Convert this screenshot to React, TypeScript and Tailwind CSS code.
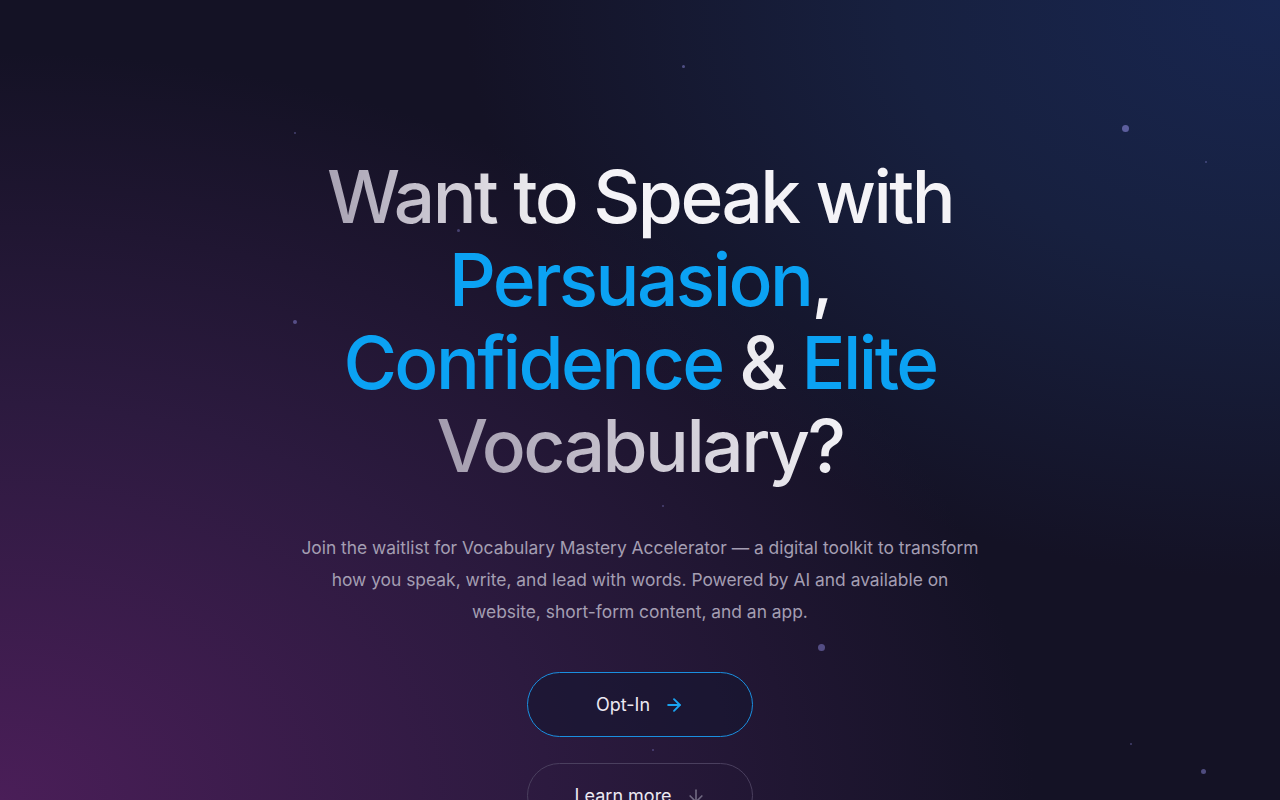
import { ArrowRight, ArrowDown } from "lucide-react";

const dots = [
    { x: 683, y: 66, s: 3, o: "opacity-50" },
    { x: 295, y: 133, s: 2, o: "opacity-40" },
    { x: 1125, y: 128, s: 7, o: "opacity-60" },
    { x: 1206, y: 162, s: 2, o: "opacity-40" },
    { x: 458, y: 230, s: 3, o: "opacity-40" },
    { x: 295, y: 322, s: 4, o: "opacity-50" },
    { x: 402, y: 378, s: 3, o: "opacity-40" },
    { x: 663, y: 506, s: 2, o: "opacity-40" },
    { x: 821, y: 647, s: 7, o: "opacity-50" },
    { x: 653, y: 750, s: 2, o: "opacity-40" },
    { x: 1131, y: 744, s: 2, o: "opacity-40" },
    { x: 1203, y: 771, s: 5, o: "opacity-50" },
];

export default function App() {
    return (
        <div
            className="relative w-full h-[800px] overflow-hidden bg-[#141225]"
            style={{ fontFamily: "Inter, 'Noto Sans', sans-serif" }}
        >
            <div className="absolute inset-0 bg-[radial-gradient(ellipse_95%_110%_at_0%_100%,#4a1e58_0%,#2c1a3f_45%,transparent_85%)]" />
            <div className="absolute inset-0 bg-[radial-gradient(ellipse_75%_85%_at_100%_0%,#182650_0%,#17203f_40%,transparent_85%)]" />

            {dots.map((d, i) => (
                <div
                    key={i}
                    className={`absolute rounded-full bg-[#8a86d8] blur-[0.5px] ${d.o}`}
                    style={{ left: d.x - d.s / 2, top: d.y - d.s / 2, width: d.s, height: d.s }}
                />
            ))}

            <div className="relative flex flex-col items-center pt-[155px]">
                <h1 className="text-center text-[73px] leading-[83px] font-medium tracking-[-0.035em]">
                    <span className="bg-gradient-to-r from-[#a8a2b3] to-white bg-clip-text text-transparent">Want to </span>
                    <span className="text-[#f4f3f7]">Speak with</span>
                    <br />
                    <span className="text-[#0ba2f3]">Persuasion</span>
                    <span className="text-[#f4f3f7]">,</span>
                    <br />
                    <span className="text-[#0ba2f3]">Confidence</span>
                    <span className="text-[#ecebf0]"> &amp; </span>
                    <span className="text-[#0ba2f3]">Elite</span>
                    <br />
                    <span className="bg-gradient-to-r from-[#a39cae] to-[#f2f1f5] bg-clip-text text-transparent">Vocabulary?</span>
                </h1>

                <p className="mt-[45px] w-[682px] text-center text-[17.4px] leading-[32px] text-[#a49eb2]">
                    Join the waitlist for Vocabulary Mastery Accelerator — a digital toolkit to transform how you speak, write, and lead with words. Powered by AI and available on website, short-form content, and an app.
                </p>

                <div className="mt-[44px] flex flex-col items-center gap-[26px]">
                    <button className="flex items-center justify-center gap-[14px] w-[226px] h-[65px] rounded-full border border-[#1a8fe0] bg-[#161530]/60 text-[18px] text-[#ece9f2]">
                        Opt-In
                        <ArrowRight className="w-[20px] h-[20px] text-[#1aa3f0]" strokeWidth={2.25} />
                    </button>
                    <button className="flex items-center justify-center gap-[14px] w-[226px] h-[65px] rounded-full border border-[#4a3f5e] bg-transparent text-[18px] text-[#ece9f2]">
                        Learn more
                        <ArrowDown className="w-[20px] h-[20px] text-[#6f6880]" strokeWidth={2} />
                    </button>
                </div>
            </div>
        </div>
    );
}
